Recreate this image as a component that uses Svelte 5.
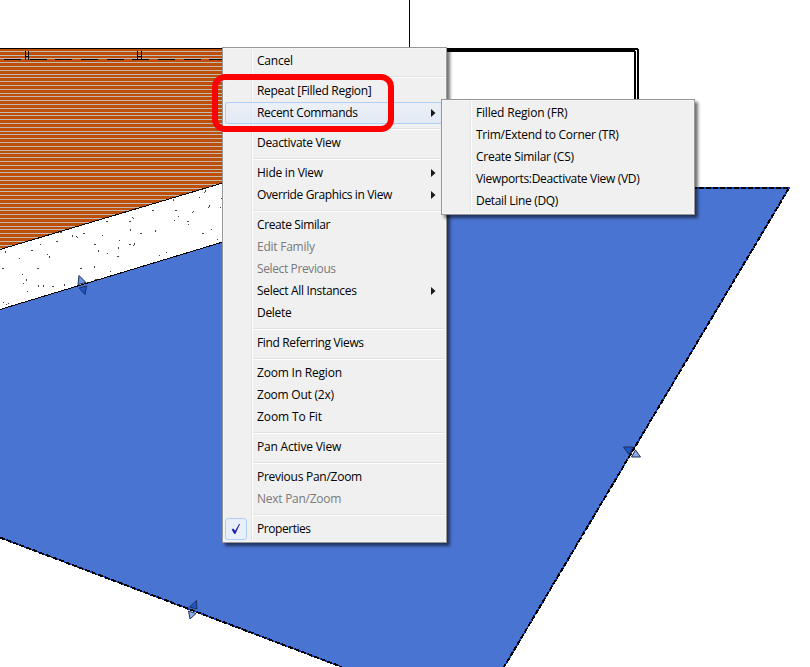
<script>
  const menu = [
    { label: "Cancel", spacing: -0.2 },
    null,
    { label: "Repeat [Filled Region]", spacing: -0.29 },
    { label: "Recent Commands", arrow: true, hover: true },
    null,
    { label: "Deactivate View" },
    null,
    { label: "Hide in View", arrow: true, spacing: -0.24 },
    { label: "Override Graphics in View", arrow: true, spacing: -0.38 },
    null,
    { label: "Create Similar", spacing: -0.38 },
    { label: "Edit Family", disabled: true, spacing: -0.24 },
    { label: "Select Previous", disabled: true, spacing: -0.38 },
    { label: "Select All Instances", arrow: true },
    { label: "Delete" },
    null,
    { label: "Find Referring Views", spacing: -0.35 },
    null,
    { label: "Zoom In Region", spacing: -0.2 },
    { label: "Zoom Out (2x)", spacing: -0.24 },
    { label: "Zoom To Fit", spacing: -0.1 },
    null,
    { label: "Pan Active View", spacing: -0.2 },
    null,
    { label: "Previous Pan/Zoom", spacing: -0.26 },
    { label: "Next Pan/Zoom", disabled: true, spacing: -0.26 },
    null,
    { label: "Properties", checked: true, spacing: -0.45 },
  ];

  const recent = [
    { label: "Filled Region (FR)", spacing: -0.18 },
    { label: "Trim/Extend to Corner (TR)", spacing: -0.26 },
    { label: "Create Similar (CS)", spacing: -0.26 },
    { label: "Viewports:Deactivate View (VD)" },
    { label: "Detail Line (DQ)" },
  ];

  // concrete speckles: x, y, width, height
  const specks = [
    [5, 251, 1, 2], [2, 268, 2, 1], [3, 302, 1, 1], [6, 304, 1, 1], [8, 303, 1, 1],
    [19, 258, 1, 1], [22, 274, 1, 1], [23, 283, 1, 1], [26, 279, 1, 2], [27, 291, 1, 1],
    [31, 250, 2, 1], [37, 268, 2, 1], [38, 285, 1, 2], [40, 244, 1, 1], [43, 285, 1, 2],
    [47, 254, 1, 1], [49, 256, 1, 2], [52, 286, 2, 1], [56, 241, 2, 1], [60, 232, 2, 1],
    [64, 284, 1, 2], [72, 235, 1, 2], [76, 236, 1, 1], [77, 237, 1, 1], [80, 268, 2, 1],
    [83, 233, 2, 1], [94, 266, 1, 2], [95, 279, 2, 1], [94, 244, 2, 1], [98, 250, 1, 2],
    [102, 235, 1, 1], [106, 221, 2, 1], [107, 253, 1, 1], [110, 271, 1, 1], [117, 256, 2, 1],
    [118, 247, 1, 2], [119, 240, 1, 1], [129, 221, 2, 1], [130, 229, 1, 2], [129, 244, 2, 1],
    [132, 217, 1, 1], [133, 218, 1, 1], [133, 245, 1, 1], [134, 243, 1, 2], [140, 233, 2, 1],
    [152, 210, 2, 1], [155, 230, 1, 2], [159, 255, 1, 1], [166, 252, 1, 1], [173, 199, 1, 2],
    [175, 210, 2, 1], [174, 220, 1, 1], [178, 216, 1, 1], [187, 221, 2, 1], [188, 224, 1, 1],
    [192, 212, 1, 1], [193, 211, 1, 1], [199, 197, 1, 1], [202, 233, 2, 1], [204, 192, 1, 1],
    [205, 190, 1, 2], [208, 207, 1, 1], [209, 186, 2, 1], [209, 205, 1, 2], [211, 229, 1, 1],
    [217, 239, 1, 1], [220, 207, 1, 1], [221, 198, 1, 1],
  ];
</script>

{#snippet entries(items)}
  {#each items as item}
    {#if item}
      <li class="item" class:hover={item.hover} class:disabled={item.disabled}>
        <span class="gutter">
          {#if item.checked}
            <span class="check">
              <svg width="10" height="12" viewBox="0 0 10 12">
                <path d="M1 6.4 L2.6 6 L4 8.4 L8.6 1 L4.3 10.6 L3.3 10.6 Z" fill="#1414a0" stroke="#1414a0" stroke-width=".6" />
              </svg>
            </span>
          {/if}
        </span>
        <span class="label" style="letter-spacing: {item.spacing ?? -0.32}px">{item.label}</span>
        {#if item.arrow}
          <svg class="arrow" width="5" height="8" viewBox="0 0 5 8">
            <path d="M0 0 L4.5 4 L0 8 Z" fill="#1a1a1a" />
          </svg>
        {/if}
      </li>
    {:else}
      <li class="separator"></li>
    {/if}
  {/each}
{/snippet}

<div class="view">
  <svg class="drawing" width="810" height="667" viewBox="0 0 810 667" shape-rendering="crispEdges">
    <defs>
      <pattern id="siding" x="0" y="58" width="10" height="19" patternUnits="userSpaceOnUse">
        <rect width="10" height="19" fill="#bf4f08" />
        {#each [0, 4, 8, 12, 16] as y}
          <rect {y} width="10" height="1" fill="#c0bab4" />
        {/each}
      </pattern>
    </defs>

    <path d="M0 48 H230 V181 L0 250 Z" fill="url(#siding)" />
    <path d="M0 48.5 H230" stroke="#000" />
    <path d="M4 59.5 H230" stroke="#000" stroke-dasharray="17 8.67" />
    <path d="M25.5 51 V60 M28.5 51 V60 M25 56.5 H29 M137.5 51 V60 M141.5 51 V60 M137 56.5 H142" stroke="#000" fill="none" />
    <path d="M0 249.5 L230 180.8" stroke="#000" />

    {#each specks as [x, y, w, h]}
      <rect {x} {y} width={w} height={h} fill="#444" />
    {/each}

    <path d="M409.5 0 V48" stroke="#000" />
    <path d="M440 50 H638" stroke="#000" stroke-width="4" />
    <path d="M635 50 V110 M638 49 V110" stroke="#000" stroke-width="2" />
    <path d="M635 50.5 H636.5 V110" fill="none" stroke="#fff" />

    <path d="M0 309.5 L401 188 H789 L504 667 H342 L0 537 Z" fill="#4a74d1" />
    <path d="M0 309.5 L401 188" stroke="#000" />
    <g fill="none" stroke="#0a44c4" stroke-width="1.5">
      <path d="M440 188 H789 L504 667" />
      <path d="M0 537.5 L342 667" />
    </g>
    <g fill="none" stroke="#000" stroke-width="2" stroke-dasharray="5 2">
      <path d="M440 188 H789 L504 667" />
      <path d="M0 537.5 L342 667" />
    </g>

    <g stroke="#1b2f5c" shape-rendering="auto">
      <path d="M79 275.5 L86 282.5 L78 284.5 Z" fill="#6f94e0" />
      <path d="M79 288 L86.5 286 L85 294.5 Z" fill="#1f55c8" />
      <path d="M623.5 447 L633 447 L629 454.5 Z" fill="#1f55c8" />
      <path d="M635.5 450 L640.5 457 L631.5 457 Z" fill="#8eaae8" />
      <path d="M196.5 600.5 L197 609 L189.5 607 Z" fill="#1f55c8" />
      <path d="M188.5 611 L196 613.5 L190 619 Z" fill="#8eaae8" />
    </g>
  </svg>

  <ul class="menu main">{@render entries(menu)}</ul>
  <ul class="menu sub">{@render entries(recent)}</ul>
  <div class="highlight"></div>
</div>

<style>
  :global(body) {
    margin: 0;
    background: #fff;
  }

  .view {
    position: relative;
    width: 810px;
    height: 667px;
    overflow: hidden;
    background: #fff;
  }

  .drawing {
    display: block;
  }

  .menu {
    position: absolute;
    box-sizing: border-box;
    margin: 0;
    padding: 2px;
    list-style: none;
    border: 1px solid #979797;
    background: linear-gradient(90deg, transparent 28px, #e2e3e3 28px, #e2e3e3 29px, #fff 29px, #fff 30px, transparent 30px) 0 2px / 100% calc(100% - 4px) no-repeat #f0f0f0;
    box-shadow: inset 0 0 0 1px #f5f5f5, 3px 3px 3px rgba(0, 0, 0, 0.55);
    font: 12px/22px "Open Sans", "Noto Sans", sans-serif;
    color: #000;
  }

  .main {
    left: 222px;
    top: 47px;
    width: 225px;
  }

  .sub {
    left: 441px;
    top: 99px;
    width: 254px;
  }

  .item {
    display: flex;
    align-items: center;
    box-sizing: border-box;
    height: 22px;
    padding-right: 8px;
  }

  .item.hover {
    border-radius: 3px;
    background: linear-gradient(rgba(235, 241, 250, 0.6), rgba(215, 229, 248, 0.6));
    box-shadow: inset 0 0 0 1px #aecff7;
  }

  .item.disabled {
    color: #7a7a7a;
  }

  .gutter {
    flex: none;
    width: 32px;
  }

  .check {
    display: flex;
    align-items: center;
    justify-content: center;
    box-sizing: border-box;
    width: 22px;
    height: 22px;
    border: 1px solid #aecff7;
    border-radius: 3px;
    background: #e9eff8;
  }

  .label {
    flex: 1;
    white-space: nowrap;
  }

  .arrow {
    flex: none;
  }

  .separator {
    box-sizing: border-box;
    height: 8px;
    margin-left: 28px;
    border-top: 4px solid transparent;
    background: linear-gradient(#e0e0e0 1px, #fff 1px, #fff 2px, transparent 2px) no-repeat padding-box;
  }

  .highlight {
    position: absolute;
    box-sizing: border-box;
    left: 212px;
    top: 74px;
    width: 182px;
    height: 58px;
    border: 6px solid #fe0000;
    border-radius: 13px;
  }
</style>
